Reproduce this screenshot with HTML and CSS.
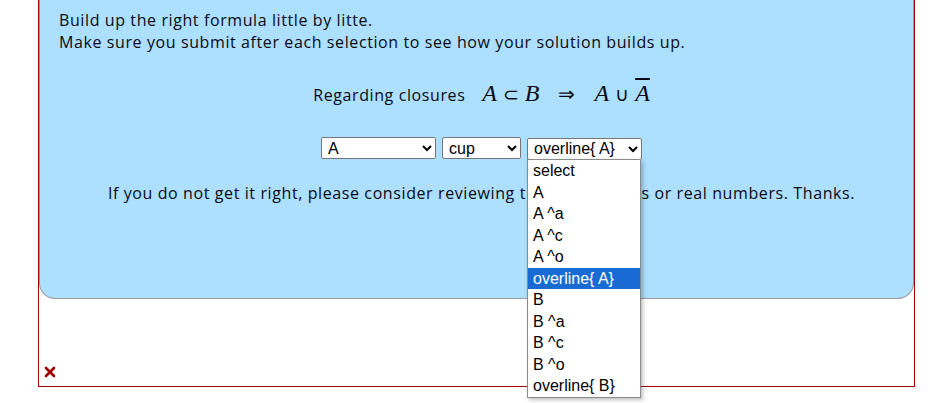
FILE: index.html
```html
<!DOCTYPE html>
<html lang="en">
<head>
<meta charset="UTF-8" />
<title>Closures</title>
<link rel="stylesheet" href="styles.css">
</head>
<body>
<div class="frame">
  <div class="panel">
    <p class="intro">Build up the right formula little by litte.<br>
    Make sure you submit after each selection to see how your solution builds up.</p>

    <p class="question">Regarding closures
      <span class="math"><i>A</i><span class="rel">&sub;</span><i>B</i><span class="arrow">&rArr;</span><i>A</i><span class="rel">&cup;</span><i class="over">A</i></span>
    </p>

    <div class="pickers">
      <select class="pick wide"><option>A</option></select>
      <select class="pick narrow"><option>cup</option></select>
      <span class="open-wrap">
        <select class="pick wide"><option>overline{ A}</option></select>
        <ul class="options">
          <li>select</li>
          <li>A</li>
          <li>A ^a</li>
          <li>A ^c</li>
          <li>A ^o</li>
          <li class="hl">overline{ A}</li>
          <li>B</li>
          <li>B ^a</li>
          <li>B ^c</li>
          <li>B ^o</li>
          <li>overline{ B}</li>
        </ul>
      </span>
    </div>

    <p class="hint">If you do not get it right, please consider reviewing the note on sets or real numbers. Thanks.</p>
  </div>
  <div class="status">
    <svg width="12" height="12" viewBox="0 0 12 12"><path d="M2 2 L10 10 M10 2 L2 10" stroke="#a00000" stroke-width="2.6" stroke-linecap="round"/></svg>
  </div>
</div>
</body>
</html>
```

FILE: styles.css
```css
/* base */
html {
  min-height: 100%;
}
body {
  margin: 0;
  padding: 0;
  min-height: 403px;
  background: #fff;
  font-family: "Open Sans", "Liberation Sans", sans-serif;
  color: #0a0a14;
}

/* outer red frame */
.frame {
  margin-left: 38px;
  width: 875px;
  height: 386px;
  border: 1px solid #a00000;
  border-top: none;
  display: flex;
  flex-direction: column;
}

/* blue question panel */
.panel {
  background: #addfff;
  border: 1px solid #9a9a9a;
  border-top: none;
  border-radius: 0 0 16px 16px;
  height: 299px;
  box-sizing: border-box;
  padding: 9px 9px 0 19px;
  font-size: 16px;
  letter-spacing: 0.6px;
}
.intro {
  margin: 0;
  line-height: 22px;
}
.question {
  margin: 28px 0 0;
  text-align: center;
  line-height: 24px;
}
.math {
  font-family: "Liberation Serif", "Times New Roman", serif;
  font-size: 24px;
  letter-spacing: 0;
  margin-left: 12px;
}
.rel {
  font-size: 19px;
  margin: 0 6px;
}
.arrow {
  font-size: 20px;
  margin: 0 19px;
}
.over {
  text-decoration: overline;
}

/* selects */
.pickers {
  margin-top: 30px;
  display: flex;
  justify-content: center;
  gap: 6px;
  letter-spacing: 0;
}
.pick {
  font-family: "Liberation Sans", Arial, sans-serif;
  font-size: 16px;
  height: 22px;
  background: #fff;
  border: 1px solid #767676;
  border-radius: 2px;
  color: #000;
  padding: 0 2px;
}
.wide { width: 115px; }
.narrow { width: 79px; }
.open-wrap {
  position: relative;
}
.options {
  position: absolute;
  top: 22px;
  left: 0;
  width: 112px;
  margin: 0;
  padding: 0;
  list-style: none;
  background: #fff;
  border: 1px solid #8a8a8a;
  box-shadow: 2px 2px 4px rgba(0,0,0,0.25);
  font-family: "Liberation Sans", Arial, sans-serif;
  font-size: 16px;
  z-index: 50;
}
.options li {
  height: 21.5px;
  line-height: 21.5px;
  padding-left: 5px;
  color: #000;
}
.options li.hl {
  background: #1a6ad4;
  color: #fff;
}
.hint {
  margin: 22px 0 0;
  text-align: center;
}

/* red mark */
.status {
  margin-top: auto;
  padding: 0 0 8px 5px;
}
.status svg { display: block; }
```
